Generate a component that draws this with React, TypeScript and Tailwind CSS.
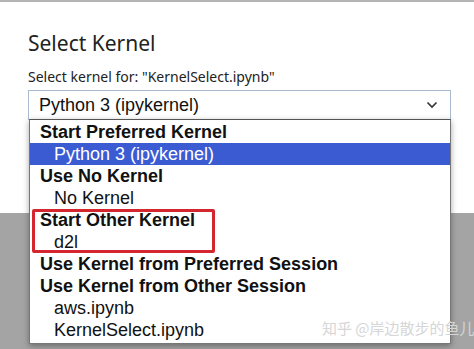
import React from "react";

const rows: { text: string; header?: boolean; selected?: boolean }[] = [
  { text: "Start Preferred Kernel", header: true },
  { text: "Python 3 (ipykernel)", selected: true },
  { text: "Use No Kernel", header: true },
  { text: "No Kernel" },
  { text: "Start Other Kernel", header: true },
  { text: "d2l" },
  { text: "Use Kernel from Preferred Session", header: true },
  { text: "Use Kernel from Other Session", header: true },
  { text: "aws.ipynb" },
  { text: "KernelSelect.ipynb" },
];

export default function App() {
  return (
    <div className="relative w-[474px] h-[349px] overflow-hidden bg-[#a4a4a4]">
      <div className="h-[2px] bg-[#b4b4b4]" />
      <div className="h-[211px] bg-white px-[28px] pt-[26px] text-[#222]" style={{ fontFamily: '"Noto Sans", "Open Sans", sans-serif' }}>
        <div className="text-[21px] leading-[30px]">Select Kernel</div>
        <div className="mt-[10px] text-[14px] leading-[18px]">Select kernel for: "KernelSelect.ipynb"</div>
        <div className="mt-[4px] flex h-[30px] w-[423px] items-center justify-between border border-[#a9bccf] bg-white pl-[10px] pr-[12px]" style={{ fontFamily: '"Liberation Sans", Arial, sans-serif' }}>
          <span className="text-[18px] text-[#111]">Python 3 (ipykernel)</span>
          <svg width="12" height="8" viewBox="0 0 12 8" fill="none" stroke="#333" strokeWidth="1.6">
            <path d="M1.5 1.5 L6 6 L10.5 1.5" />
          </svg>
        </div>
      </div>

      <div
        className="absolute left-[29px] top-[119px] w-[422px] border border-[#777] border-t-[#555] bg-white pb-[2px] shadow-[0_2px_6px_rgba(0,0,0,0.35)]"
        style={{ fontFamily: '"Liberation Sans", Arial, sans-serif' }}
      >
        <div className="flex flex-col pt-[1px]">
          {rows.map((r, i) => (
            <div
              key={i}
              className={
                "h-[22px] text-[18px] leading-[22px] whitespace-nowrap " +
                (r.header ? "font-bold pl-[10px] text-[#111] " : "pl-[24px] ") +
                (r.selected ? "bg-[#3b5bd3] text-white" : r.header ? "" : "text-[#111]")
              }
            >
              {r.text}
            </div>
          ))}
        </div>
        <div className="absolute left-[2px] top-[89px] h-[44px] w-[183px] rounded-[2px] border-[3px] border-[#d3262e]" />
      </div>

      <div
        className="absolute left-[322px] top-[317px] text-[15px] leading-[22px] text-[#d6d6d6] whitespace-nowrap"
        style={{ fontFamily: '"Noto Sans CJK SC", sans-serif' }}
      >
        知乎 @岸边散步的鱼儿
      </div>
    </div>
  );
}
